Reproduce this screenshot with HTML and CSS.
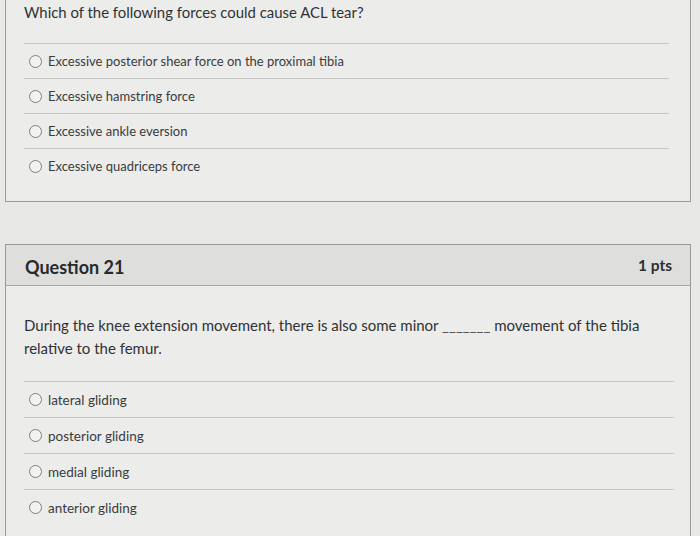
FILE: index.html
```html
<!DOCTYPE html>
<html>
<head>
<meta charset="utf-8">
<link rel="stylesheet" href="styles.css">
</head>
<body>
<div class="page">
  <section class="card card-open">
    <div class="q-text q-first">Which of the following forces could cause ACL tear?</div>
    <ul class="answers">
      <li class="answer"><span class="radio"></span><span>Excessive posterior shear force on the proximal tibia</span></li>
      <li class="answer"><span class="radio"></span><span>Excessive hamstring force</span></li>
      <li class="answer"><span class="radio"></span><span>Excessive ankle eversion</span></li>
      <li class="answer"><span class="radio"></span><span>Excessive quadriceps force</span></li>
    </ul>
  </section>

  <section class="card card-2">
    <header class="card-head">
      <h2 class="q-title">Question 21</h2>
      <span class="pts">1 pts</span>
    </header>
    <div class="card-body">
      <div class="q-text q-second">During the knee extension movement, there is also some minor <span class="blank">_______</span> movement of the tibia relative to the femur.</div>
      <ul class="answers answers-2">
        <li class="answer"><span class="radio"></span><span>lateral gliding</span></li>
        <li class="answer"><span class="radio"></span><span>posterior gliding</span></li>
        <li class="answer"><span class="radio"></span><span>medial gliding</span></li>
        <li class="answer"><span class="radio"></span><span>anterior gliding</span></li>
      </ul>
    </div>
  </section>
</div>
</body>
</html>
```

FILE: styles.css
```css
html, body {
  margin: 0;
  padding: 0;
  background: #e8e8e6;
  font-family: Lato, "Open Sans", Arial, sans-serif;
  color: #2f3336;
}

.page {
  width: 686px;
  margin-left: 5px;
  display: flex;
  flex-direction: column;
  gap: 42px;
}

.card {
  background: #ececea;
  border: 1px solid #9a9a98;
}

.card-open {
  border-top: none;
  padding: 2px 21px 18px 18px;
}

.q-text {
  font-size: 14.9px;
  line-height: 20px;
}

.q-first {
  height: 41px;
}

.answers {
  list-style: none;
  margin: 0;
  padding: 0;
}

.answer {
  display: flex;
  align-items: center;
  gap: 6px;
  height: 34px;
  border-top: 1px solid #c6c6c4;
  font-size: 13px;
  color: #3a3c3e;
  padding-left: 5px;
}

.radio {
  width: 11px;
  height: 11px;
  border: 1.2px solid #7d7f80;
  border-radius: 50%;
  background: #f2f2f0;
  flex: none;
}

.card-2 {
  height: 292px;
  border-bottom: none;
}

.card-head {
  display: flex;
  justify-content: space-between;
  align-items: center;
  height: 40px;
  padding: 0 18px 0 19px;
  background: #dededc;
  border-bottom: 1px solid #a8a8a6;
}

.q-title {
  margin: 3px 0 0 0;
  font-size: 18px;
  font-weight: 700;
  color: #262a2d;
}

.pts {
  font-size: 15.5px;
  font-weight: 700;
  color: #2c3033;
  margin-top: -1px;
}

.card-body {
  padding: 28px 16px 0 18px;
}

.q-second {
  font-size: 15px;
  line-height: 23px;
  height: 67px;
  padding-right: 30px;
}

.blank {
  color: #555;
}

.answers-2 .answer {
  height: 35px;
  font-size: 13.5px;
}
```
